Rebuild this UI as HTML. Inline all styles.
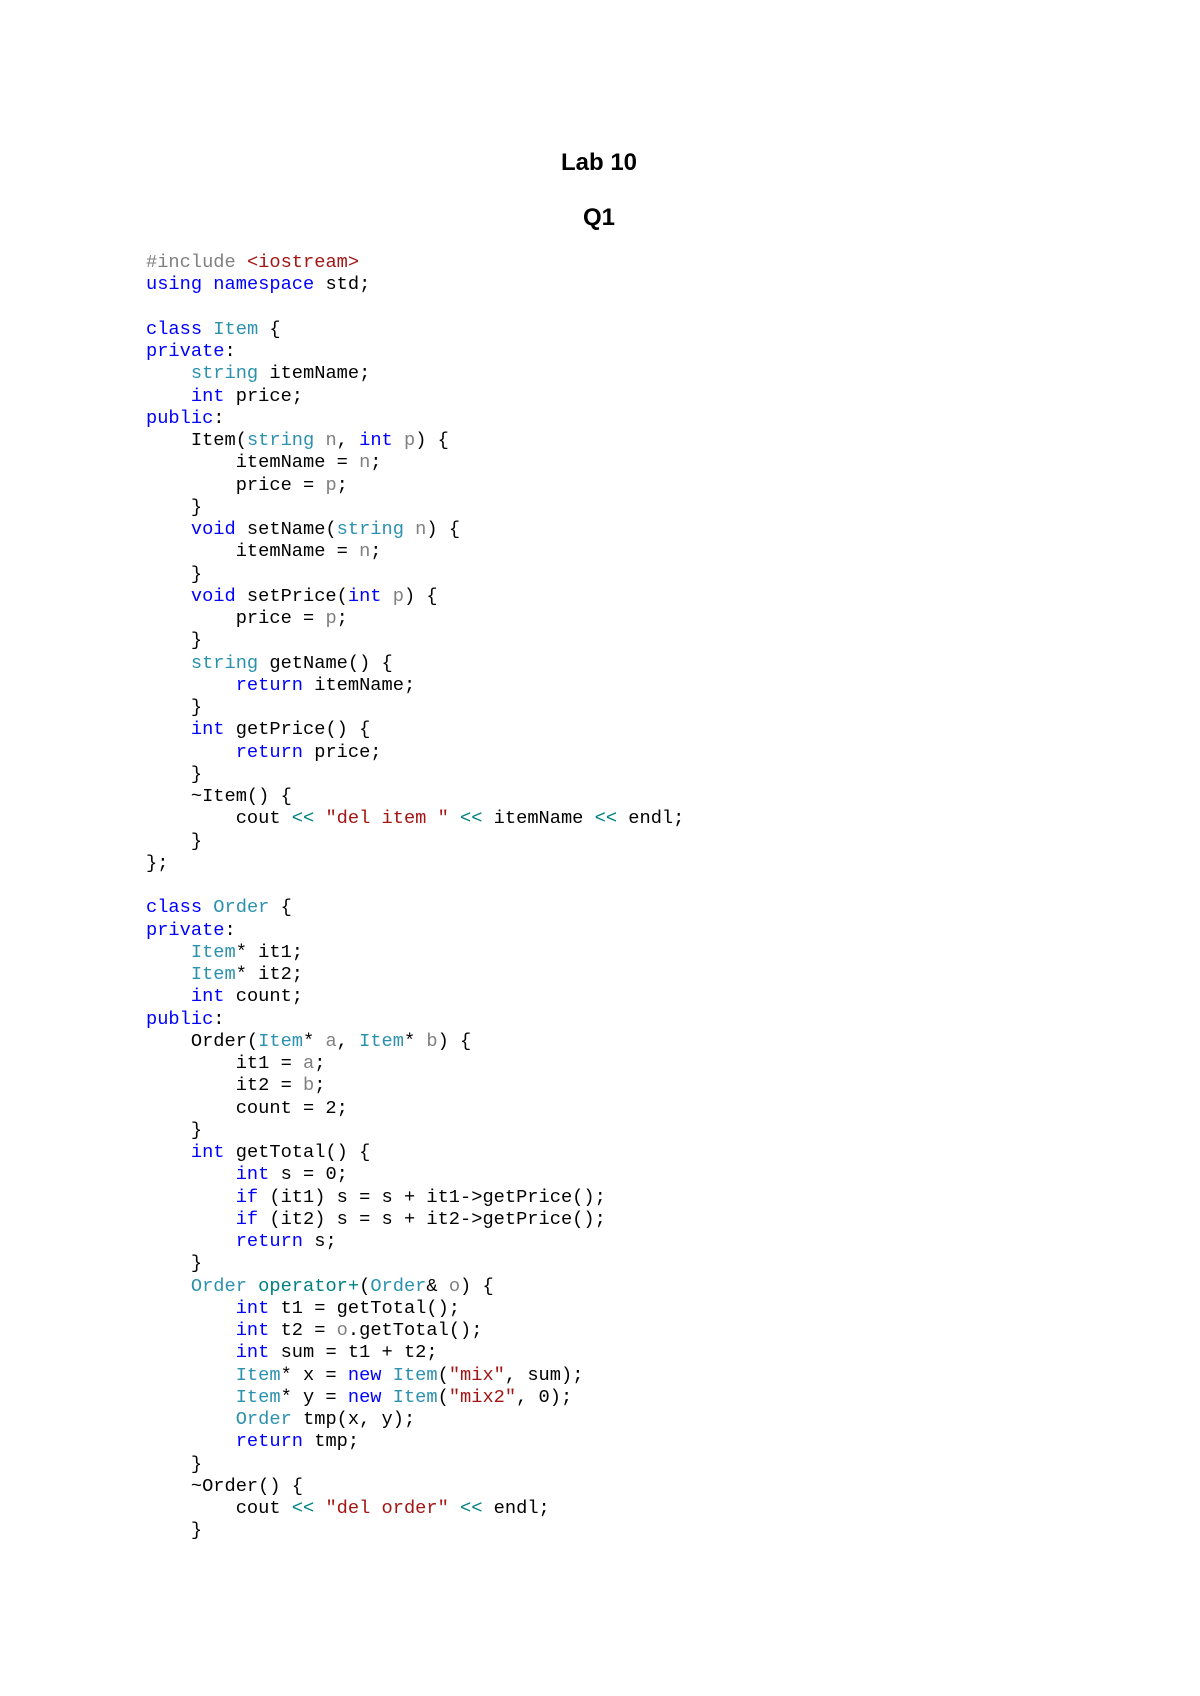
<!DOCTYPE html>
<html><head><meta charset="utf-8"><style>
body{margin:0;background:#fff;width:1200px;height:1696px;position:relative;overflow:hidden}
.t{position:absolute;left:0;width:1198px;text-align:center;font-family:"Liberation Sans",sans-serif;font-weight:bold;font-size:24px;color:#000}
pre{position:absolute;left:146px;top:251px;margin:0;font-family:"Liberation Mono",monospace;font-size:18.7px;line-height:22.25px;color:#000}
.k{color:#0000ff}.y{color:#2b91af}.s{color:#a31515}.g{color:#808080}.f{color:#008080}
</style></head><body>
<div class="t" style="top:149px">Lab 10</div>
<div class="t" style="top:204px">Q1</div>
<pre><span class="g">#include</span> <span class="s">&lt;iostream&gt;</span>
<span class="k">using</span> <span class="k">namespace</span> std;

<span class="k">class</span> <span class="y">Item</span> {
<span class="k">private</span>:
    <span class="y">string</span> itemName;
    <span class="k">int</span> price;
<span class="k">public</span>:
    Item(<span class="y">string</span> <span class="g">n</span>, <span class="k">int</span> <span class="g">p</span>) {
        itemName = <span class="g">n</span>;
        price = <span class="g">p</span>;
    }
    <span class="k">void</span> setName(<span class="y">string</span> <span class="g">n</span>) {
        itemName = <span class="g">n</span>;
    }
    <span class="k">void</span> setPrice(<span class="k">int</span> <span class="g">p</span>) {
        price = <span class="g">p</span>;
    }
    <span class="y">string</span> getName() {
        <span class="k">return</span> itemName;
    }
    <span class="k">int</span> getPrice() {
        <span class="k">return</span> price;
    }
    ~Item() {
        cout <span class="f">&lt;&lt;</span> <span class="s">"del item "</span> <span class="f">&lt;&lt;</span> itemName <span class="f">&lt;&lt;</span> endl;
    }
};

<span class="k">class</span> <span class="y">Order</span> {
<span class="k">private</span>:
    <span class="y">Item</span>* it1;
    <span class="y">Item</span>* it2;
    <span class="k">int</span> count;
<span class="k">public</span>:
    Order(<span class="y">Item</span>* <span class="g">a</span>, <span class="y">Item</span>* <span class="g">b</span>) {
        it1 = <span class="g">a</span>;
        it2 = <span class="g">b</span>;
        count = 2;
    }
    <span class="k">int</span> getTotal() {
        <span class="k">int</span> s = 0;
        <span class="k">if</span> (it1) s = s + it1-&gt;getPrice();
        <span class="k">if</span> (it2) s = s + it2-&gt;getPrice();
        <span class="k">return</span> s;
    }
    <span class="y">Order</span> <span class="f">operator+</span>(<span class="y">Order</span>&amp; <span class="g">o</span>) {
        <span class="k">int</span> t1 = getTotal();
        <span class="k">int</span> t2 = <span class="g">o</span>.getTotal();
        <span class="k">int</span> sum = t1 + t2;
        <span class="y">Item</span>* x = <span class="k">new</span> <span class="y">Item</span>(<span class="s">"mix"</span>, sum);
        <span class="y">Item</span>* y = <span class="k">new</span> <span class="y">Item</span>(<span class="s">"mix2"</span>, 0);
        <span class="y">Order</span> tmp(x, y);
        <span class="k">return</span> tmp;
    }
    ~Order() {
        cout <span class="f">&lt;&lt;</span> <span class="s">"del order"</span> <span class="f">&lt;&lt;</span> endl;
    }</pre>
</body></html>
